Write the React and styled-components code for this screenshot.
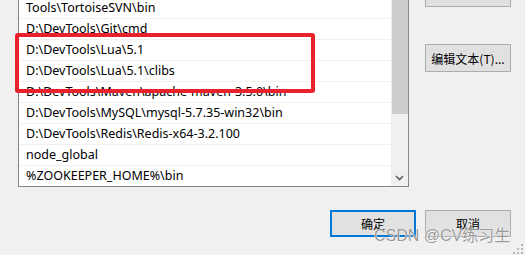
import React from "react";
import styled, { createGlobalStyle } from "styled-components";

const Global = createGlobalStyle`
  html, body { margin: 0; padding: 0; background: #f0f0f0; }
  body { width: 525px; height: 255px; overflow: hidden; }
`;

const Page = styled.div`
  position: relative;
  width: 525px;
  height: 255px;
  background: #f0f0f0;
  overflow: hidden;
  display: flex;
  flex-direction: column;
  font-family: "Noto Sans", "Noto Sans CJK SC", sans-serif;
  font-size: 12.5px;
  color: #000;
`;

const TopSection = styled.div`
  display: flex;
  align-items: flex-start;
  padding-left: 18px;
  gap: 16px;
`;

const ListBox = styled.div`
  box-sizing: border-box;
  margin-top: -2px;
  width: 391px;
  height: 189px;
  border: 1px solid #828790;
  background: #fff;
  display: flex;
  overflow: hidden;
`;

const Rows = styled.div`
  flex: 1;
  display: flex;
  flex-direction: column;
  margin-top: -1px;
`;

const Row = styled.div`
  box-sizing: border-box;
  flex: 0 0 21px;
  height: 21px;
  border-bottom: 1px solid #f0f0f0;
  padding-left: 7px;
  display: flex;
  align-items: center;
  white-space: nowrap;
  line-height: 20px;
`;

const ScrollBar = styled.div`
  flex: 0 0 17px;
  display: flex;
  flex-direction: column;
  background: #f0f0f0;
`;

const Thumb = styled.div`
  margin: 0 0 0 1px;
  height: 115px;
  background: #cdcdcd;
`;

const Track = styled.div`
  flex: 1;
`;

const ArrowButton = styled.div`
  height: 17px;
  display: flex;
  align-items: center;
  justify-content: center;
`;

const RightColumn = styled.div`
  display: flex;
  flex-direction: column;
  gap: 37px;
  margin-top: -21px;
`;

const Button = styled.div`
  box-sizing: border-box;
  width: 86px;
  height: ${(p) => p.$h || 28}px;
  background: #e1e1e1;
  border: ${(p) => (p.$default ? "2px solid #0078d7" : "1px solid #adadad")};
  display: flex;
  align-items: center;
  justify-content: center;
  font-family: "Noto Sans CJK SC", sans-serif;
  font-size: 12px;
  color: #000;
  white-space: nowrap;
`;

const BottomBar = styled.div`
  display: flex;
  justify-content: flex-end;
  gap: 9px;
  margin-top: 23px;
  padding-right: 14px;
`;

const Highlight = styled.div`
  position: absolute;
  left: 15px;
  top: 33px;
  width: 300px;
  height: 60px;
  box-sizing: border-box;
  border: 4px solid #e8212d;
  border-radius: 3px;
  pointer-events: none;
`;

const Watermark = styled.div`
  position: absolute;
  left: 374px;
  top: 226px;
  font-family: "Liberation Sans", "Noto Sans CJK SC", sans-serif;
  font-size: 16px;
  line-height: 20px;
  color: rgba(125, 125, 125, 0.8);
  text-shadow: 0 0 1px #fff, 0 0 1px #fff;
  white-space: nowrap;
  pointer-events: none;
`;

const Grip = styled.svg`
  position: absolute;
  right: 2px;
  bottom: 1px;
`;

const items = [
  "Tools\\TortoiseSVN\\bin",
  "D:\\DevTools\\Git\\cmd",
  "D:\\DevTools\\Lua\\5.1",
  "D:\\DevTools\\Lua\\5.1\\clibs",
  "D:\\DevTools\\Maven\\apache-maven-3.5.0\\bin",
  "D:\\DevTools\\MySQL\\mysql-5.7.35-win32\\bin",
  "D:\\DevTools\\Redis\\Redis-x64-3.2.100",
  "node_global",
  "%ZOOKEEPER_HOME%\\bin",
];

export default function App() {
  return (
    <Page>
      <Global />
      <TopSection>
        <ListBox>
          <Rows>
            {items.map((t) => (
              <Row key={t}>{t}</Row>
            ))}
          </Rows>
          <ScrollBar>
            <Thumb />
            <Track />
            <ArrowButton>
              <svg width="9" height="6" viewBox="0 0 9 6">
                <path d="M1 1 L4.5 4.5 L8 1" fill="none" stroke="#606060" strokeWidth="1.6" />
              </svg>
            </ArrowButton>
          </ScrollBar>
        </ListBox>
        <RightColumn>
          <Button />
          <Button>编辑文本(T)...</Button>
        </RightColumn>
      </TopSection>
      <BottomBar>
        <Button $default $h={27}>确定</Button>
        <Button $h={27}>取消</Button>
      </BottomBar>
      <Highlight />
      <Watermark>CSDN @CV练习生</Watermark>
      <Grip width="10" height="10" viewBox="0 0 10 10">
        <g fill="#b8b8b8">
          <rect x="8" y="0" width="2" height="2" />
          <rect x="4" y="4" width="2" height="2" />
          <rect x="8" y="4" width="2" height="2" />
          <rect x="0" y="8" width="2" height="2" />
          <rect x="4" y="8" width="2" height="2" />
          <rect x="8" y="8" width="2" height="2" />
        </g>
      </Grip>
    </Page>
  );
}
